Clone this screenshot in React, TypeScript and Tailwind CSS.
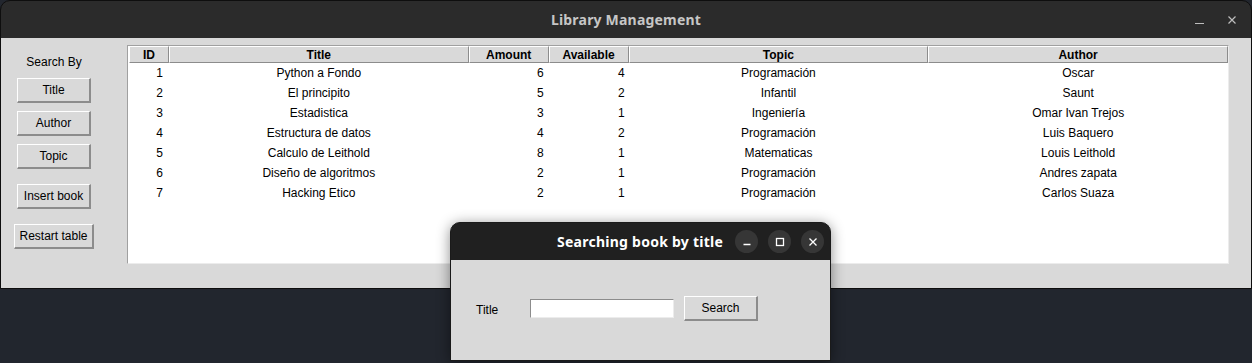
import React from 'react';

type Book = { id: number; title: string; amount: number; available: number; topic: string; author: string };

const books: Book[] = [
    { id: 1, title: 'Python a Fondo', amount: 6, available: 4, topic: 'Programación', author: 'Oscar' },
    { id: 2, title: 'El principito', amount: 5, available: 2, topic: 'Infantil', author: 'Saunt' },
    { id: 3, title: 'Estadistica', amount: 3, available: 1, topic: 'Ingeniería', author: 'Omar Ivan Trejos' },
    { id: 4, title: 'Estructura de datos', amount: 4, available: 2, topic: 'Programación', author: 'Luis Baquero' },
    { id: 5, title: 'Calculo de Leithold', amount: 8, available: 1, topic: 'Matematicas', author: 'Louis Leithold' },
    { id: 6, title: 'Diseño de algoritmos', amount: 2, available: 1, topic: 'Programación', author: 'Andres zapata' },
    { id: 7, title: 'Hacking Etico', amount: 2, available: 1, topic: 'Programación', author: 'Carlos Suaza' },
];

const TkButton: React.FC<{ label: string; className?: string }> = ({ label, className }) => (
    <button
        className={`h-[25px] bg-[#d9d9d9] border-t border-l border-r-2 border-b-2 border-t-white border-l-white border-r-[#8c8c8c] border-b-[#8c8c8c] text-[12px] text-black flex items-center justify-center ${className ?? ''}`}
    >
        {label}
    </button>
);

const headers = [
    { label: 'ID', w: 'w-[40px]' },
    { label: 'Title', w: 'w-[300px]' },
    { label: 'Amount', w: 'w-[80px]' },
    { label: 'Available', w: 'w-[80px]' },
    { label: 'Topic', w: 'w-[300px]' },
    { label: 'Author', w: 'w-[300px]' },
];

const App: React.FC = () => {
    return (
        <div className="w-[1252px] h-[363px] bg-[#22262e] relative overflow-hidden" style={{ fontFamily: '"Liberation Sans", Arial, sans-serif' }}>
            {/* main window */}
            <div className="h-[289px] flex flex-col rounded-t-[10px] border border-[#0e0e0e] bg-[#2b2b2b] overflow-hidden">
                <div className="h-[37px] relative flex items-center justify-center shrink-0">
                    <span className="text-[14px] font-bold text-[#c6c6c6] tracking-[0.2px]" style={{ fontFamily: '"Noto Sans", "Open Sans", sans-serif' }}>
                        Library Management
                    </span>
                    <div className="absolute right-[14px] top-0 h-full flex items-center gap-[22px] text-[#bdbdbd]">
                        <svg width="11" height="11" viewBox="0 0 11 11"><path d="M1 9.5h9" stroke="currentColor" strokeWidth="1.2" /></svg>
                        <svg width="10" height="10" viewBox="0 0 10 10"><path d="M1.5 1.5l7 7M8.5 1.5l-7 7" stroke="currentColor" strokeWidth="1.2" /></svg>
                    </div>
                </div>
                <div className="flex-1 bg-[#d9d9d9] flex">
                    <div className="w-[106px] flex flex-col items-center">
                        <div className="mt-[17px] text-[12px] text-black leading-[14px]">Search By</div>
                        <TkButton label="Title" className="w-[74px] mt-[9px]" />
                        <TkButton label="Author" className="w-[74px] mt-[8px]" />
                        <TkButton label="Topic" className="w-[74px] mt-[8px]" />
                        <TkButton label="Insert book" className="w-[74px] mt-[15px]" />
                        <TkButton label="Restart table" className="w-[80px] mt-[15px]" />
                    </div>
                    <div className="ml-[20px] mt-[7px] w-[1102px] h-[219px] bg-white border-t border-l border-b border-r border-t-[#a0a0a0] border-l-[#a0a0a0] border-b-[#ececec] border-r-[#ececec] text-[12px] text-black">
                        <div className="flex h-[17px] ml-[1px]">
                            {headers.map(h => (
                                <div
                                    key={h.label}
                                    className={`${h.w} h-full bg-[#d9d9d9] border-t border-l border-r border-b border-t-white border-l-white border-r-[#8c8c8c] border-b-[#8c8c8c] flex items-center justify-center font-bold text-[12px] leading-none`}
                                >
                                    {h.label}
                                </div>
                            ))}
                        </div>
                        <div className="ml-[1px]">
                            {books.map(b => (
                                <div key={b.id} className="flex h-[20px] items-center leading-none">
                                    <div className="w-[40px] text-right pr-[6px]">{b.id}</div>
                                    <div className="w-[300px] text-center">{b.title}</div>
                                    <div className="w-[80px] text-right pr-[5px]">{b.amount}</div>
                                    <div className="w-[80px] text-right pr-[4px]">{b.available}</div>
                                    <div className="w-[300px] text-center">{b.topic}</div>
                                    <div className="w-[300px] text-center">{b.author}</div>
                                </div>
                            ))}
                        </div>
                    </div>
                </div>
            </div>

            {/* search dialog */}
            <div className="absolute left-[450px] top-[222px] w-[381px] h-[139px] rounded-t-[10px] bg-[#202020] border border-[#1a1a1a] shadow-[0_2px_14px_rgba(0,0,0,0.45)] flex flex-col overflow-hidden">
                <div className="h-[37px] shrink-0 relative flex items-center">
                    <span className="absolute left-[106px] text-[14px] font-bold text-white tracking-[0.25px]" style={{ fontFamily: '"Noto Sans", "Open Sans", sans-serif' }}>
                        Searching book by title
                    </span>
                    <div className="absolute right-[6px] flex items-center gap-[10px]">
                        <div className="w-[23px] h-[23px] rounded-full bg-[#363636] flex items-center justify-center">
                            <svg width="10" height="10" viewBox="0 0 10 10"><path d="M1.5 7.5h7" stroke="white" strokeWidth="1.3" /></svg>
                        </div>
                        <div className="w-[23px] h-[23px] rounded-full bg-[#363636] flex items-center justify-center">
                            <svg width="10" height="10" viewBox="0 0 10 10"><rect x="1.5" y="1.5" width="7" height="7" fill="none" stroke="white" strokeWidth="1.3" /></svg>
                        </div>
                        <div className="w-[23px] h-[23px] rounded-full bg-[#363636] flex items-center justify-center">
                            <svg width="10" height="10" viewBox="0 0 10 10"><path d="M1.5 1.5l7 7M8.5 1.5l-7 7" stroke="white" strokeWidth="1.3" /></svg>
                        </div>
                    </div>
                </div>
                <div className="flex-1 bg-[#d9d9d9] flex items-start pt-[36px] text-[12px] text-black">
                    <div className="ml-[25px] mt-[5px] w-[54px]">Title</div>
                    <div className="w-[144px] h-[19px] mt-[3px] bg-white border-t border-l border-b border-r border-t-[#8c8c8c] border-l-[#8c8c8c] border-b-[#ececec] border-r-[#ececec]" />
                    <TkButton label="Search" className="w-[74px] ml-[10px]" />
                </div>
            </div>
        </div>
    );
};

export default App;
